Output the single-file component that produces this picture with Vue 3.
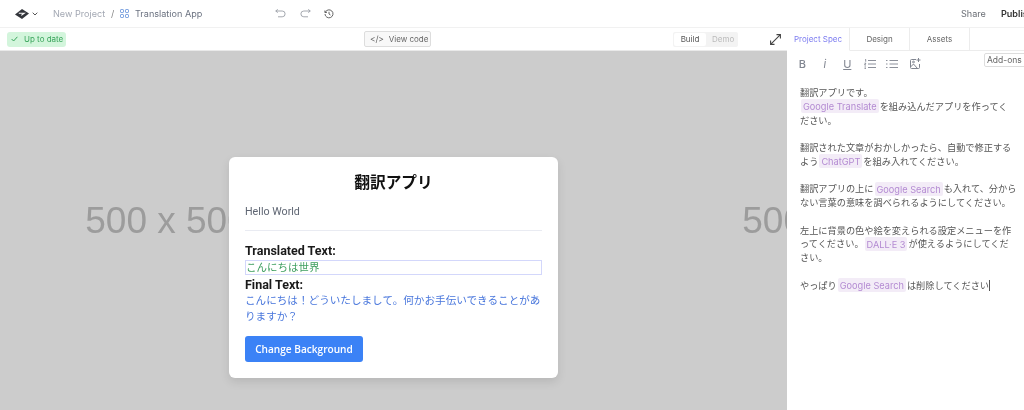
<script setup>
const tabs = ['Project Spec', 'Design', 'Assets']
</script>

<template>
  <div class="app">
    <header class="topbar">
      <div class="brand">
        <svg width="14" height="10" viewBox="0 0 14 10"><path d="M7 0 14 4.500 7 10 0 5.500Z" fill="#33353b"/><path d="M3.800 4.300h5.400L6.300 6.400" fill="none" stroke="#fff" stroke-width="1.100"/></svg>
        <svg width="6" height="4" viewBox="0 0 6 4"><path d="M.7.7 3 3 5.300.7" fill="none" stroke="#555" stroke-width="1"/></svg>
      </div>
      <span class="crumb">New Project</span>
      <span class="slash">/</span>
      <svg class="grid-icon" width="9" height="9" viewBox="0 0 9 9" fill="none" stroke="#5b8bd8" stroke-width=".9"><rect x=".5" y=".5" width="3" height="3" rx=".8"/><rect x="5.500" y=".5" width="3" height="3" rx=".8"/><rect x=".5" y="5.500" width="3" height="3" rx=".8"/><rect x="5.500" y="5.500" width="3" height="3" rx=".8"/></svg>
      <span class="app-name">Translation App</span>
      <div class="history">
        <svg width="11" height="9" viewBox="0 0 11 9" fill="none" stroke="#9a9ea6" stroke-width=".9"><path d="M2.800.4.700 2l2.100 1.600M.9 2h6.300a2.700 2.700 0 0 1 0 5.800H3"/></svg>
        <svg width="11" height="9" viewBox="0 0 11 9" fill="none" stroke="#9a9ea6" stroke-width=".9"><path d="M8.200.4 10.300 2 8.200 3.600M10.100 2H3.800a2.700 2.700 0 0 0 0 5.800H8"/></svg>
        <svg width="10" height="10" viewBox="0 0 10 10" fill="none" stroke="#555" stroke-width=".9"><path d="M1.300 3.300A4 4 0 1 1 1 5M.9 1.500v2h2M5 2.800V5l1.500 1"/></svg>
      </div>
      <div class="top-actions">
        <span class="share">Share</span>
        <span class="publish">Publish</span>
      </div>
    </header>

    <div class="workspace">
      <main class="preview">
        <div class="toolbar">
          <div class="status">
            <svg width="7" height="6" viewBox="0 0 7 6"><path d="M.6 3 2.600 5 6.400.8" fill="none" stroke="#3aa55c" stroke-width="1"/></svg>
            <span>Up to date</span>
          </div>
          <button class="code-btn"><span class="code-glyph">&lt;/&gt;</span>View code</button>
          <div class="mode">
            <span class="mode-on">Build</span>
            <span class="mode-off">Demo</span>
          </div>
          <svg class="expand" width="11" height="11" viewBox="0 0 11 11" fill="none" stroke="#444" stroke-width="1.100"><path d="M6.500.6h3.900v3.900M10.400.6.6 10.400M.6 6.500v3.900h3.900"/></svg>
        </div>
        <div class="canvas">
          <div class="tiles">
            <div class="tile">500 x 500</div>
            <div class="tile">500 x 500</div>
          </div>
          <section class="card">
            <h1>翻訳アプリ</h1>
            <p class="source">Hello World</p>
            <hr>
            <h2>Translated Text:</h2>
            <div class="translated">こんにちは世界</div>
            <h2>Final Text:</h2>
            <p class="final">こんにちは！どういたしまして。何かお手伝いできることがありますか？</p>
            <button class="change">Change Background</button>
          </section>
        </div>
      </main>

      <aside class="spec">
        <nav class="tabs">
          <span v-for="(t, i) in tabs" :key="t" class="tab" :class="{ active: i === 0 }">{{ t }}</span>
          <span class="tab-fill"></span>
        </nav>
        <div class="format">
          <span class="tool b">B</span>
          <span class="tool i">i</span>
          <span class="tool u">U</span>
          <span class="tool"><svg width="12" height="10" viewBox="0 0 12 10" fill="none" stroke="#808590" stroke-width=".9"><path d="M4 1.500h8M4 5h8M4 8.500h8M1 .4h.7v2.300M.5 4.200h1.400L.5 6h1.500M.5 8h1.500M.5 9.600h1.500"/></svg></span>
          <span class="tool"><svg width="12" height="10" viewBox="0 0 12 10" fill="none" stroke="#808590" stroke-width=".9"><path d="M3.500 1.500H12M3.500 5H12M3.500 8.500H12M0 1.500h1.500M0 5h1.500M0 8.500h1.500"/></svg></span>
          <span class="tool"><svg width="12" height="12" viewBox="0 0 12 12" fill="none" stroke="#808590" stroke-width="1"><path d="M7 1.500H2.500a1 1 0 0 0-1 1v7a1 1 0 0 0 1 1h7a1 1 0 0 0 1-1V6M1.500 9 4.500 6l4 4.500M9.500 0v4M7.500 2h4"/><circle cx="4.500" cy="4" r=".9"/></svg></span>
          <span class="addons">Add-ons</span>
        </div>
        <div class="doc">
          <p>翻訳アプリです。<br><span class="chip">Google Translate</span>を組み込んだアプリを作ってく<br>ださい。</p>
          <p>翻訳された文章がおかしかったら、自動で修正する<br>よう<span class="chip">ChatGPT</span>を組み入れてください。</p>
          <p>翻訳アプリの上に<span class="chip">Google Search</span>も入れて、分から<br>ない言葉の意味を調べられるようにしてください。</p>
          <p>左上に背景の色や絵を変えられる設定メニューを作<br>ってください。<span class="chip">DALL·E 3</span>が使えるようにしてくだ<br>さい。</p>
          <p>やっぱり<span class="chip">Google Search</span>は削除してください<span class="caret"></span></p>
        </div>
      </aside>
    </div>
  </div>
</template>

<style>
html, body { margin: 0; background: #fff; }
</style>

<style scoped>
.app {
  width: 1024px;
  height: 410px;
  overflow: hidden;
  display: flex;
  flex-direction: column;
  font-family: Inter, "Noto Sans CJK JP", sans-serif;
  color: #444;
  filter: blur(0.35px);
}
.topbar {
  height: 27px;
  flex: none;
  display: flex;
  align-items: center;
  border-bottom: 1px solid #f1f1f1;
  font-size: 9.100px;
  padding-left: 15px;
}
.brand { display: flex; align-items: center; gap: 3px; width: 38px; }
.crumb { color: #a3a8b3; width: 58px; }
.slash { color: #888; width: 9px; }
.grid-icon { margin-right: 6px; }
.app-name { color: #6b7280; width: 140px; }
.history { display: flex; align-items: center; gap: 13.500px; }
.top-actions { margin-left: auto; display: flex; gap: 15px; width: 63px; overflow: hidden; white-space: nowrap; }
.share { color: #6b6f76; }
.publish { color: #333; font-weight: 600; }

.workspace { flex: 1; display: flex; min-height: 0; }
.preview { width: 787px; flex: none; display: flex; flex-direction: column; }
.toolbar {
  height: 23px;
  box-sizing: border-box;
  flex: none;
  display: flex;
  align-items: center;
  padding-left: 7px;
  font-size: 8px;
  border-bottom: 1px solid #e9e9e9;
}
.status {
  width: 59px; height: 15px;
  box-sizing: border-box;
  padding-left: 4px;
  display: flex; align-items: center; gap: 6px;
  background: #d3f5dc;
  color: #3aa55c;
  border-radius: 3px;
  white-space: nowrap;
}
.code-btn {
  margin-left: 298px;
  width: 67px; height: 16px;
  box-sizing: border-box;
  display: flex; align-items: center; gap: 5px;
  padding: 0 0 0 5px;
  background: #f8f8f8;
  border: 1px solid #ddd;
  border-radius: 2px;
  font: inherit;
  color: #666;
  white-space: nowrap;
}
.code-glyph { font-size: 8.500px; letter-spacing: -.2px; }
.mode {
  margin-left: 242px;
  width: 65px; height: 15px;
  display: flex; align-items: center;
  background: #f3f3f3;
  border-radius: 2px;
  white-space: nowrap;
}
.mode-on { background: #fff; width: 32px; height: 13px; line-height: 13px; text-align: center; color: #555; margin-left: 1px; border-radius: 2px; }
.mode-off { color: #bbb; margin-left: 6px; }
.expand { margin-left: 32px; }

.canvas {
  flex: 1;
  min-height: 0;
  overflow: hidden;
  background: #ccc;
  display: grid;
  grid-template-columns: minmax(0, 1fr);
  grid-template-rows: minmax(0, 1fr);
}
.tiles {
  grid-area: 1 / 1;
  display: flex;
  margin-left: -162px;
  padding-top: 148px;
  height: 44px;
}
.tile {
  flex: none;
  width: 657px;
  text-align: center;
  font: 37px/44px "Liberation Sans", sans-serif;
  color: #9c9c9c;
}
.card {
  grid-area: 1 / 1;
  justify-self: center;
  align-self: start;
  margin-top: 106px;
  width: 329px;
  height: 221px;
  box-sizing: border-box;
  padding: 15px 16px 0;
  background: #fff;
  border-radius: 6px;
  box-shadow: 0 4px 10px rgba(0, 0, 0, .1);
  font-family: Roboto, "Noto Sans CJK JP", sans-serif;
}
.card h1 {
  margin: 0;
  font-size: 15.700px;
  line-height: 22px;
  font-weight: 700;
  text-align: center;
  color: #111;
}
.source { margin: 10px 0 0; font-size: 10.700px; line-height: 15px; color: #5f6673; }
.card hr { margin: 11px 0 0; border: 0; border-top: 1px solid #e9ebf2; }
.card h2 { margin: 0; font-size: 12.500px; line-height: 15px; font-weight: 700; color: #1a1a1a; }
.card hr + h2 { margin-top: 12px; }
.translated {
  margin: 2px 0 2px;
  height: 15px;
  box-sizing: border-box;
  border: 1px solid #d3d7fb;
  font-size: 10.500px;
  line-height: 13px;
  color: #3f9f60;
  white-space: nowrap;
}
.final { margin: 1px 0 0; font-size: 10.600px; line-height: 16px; color: #4876dc; }
.change {
  display: block;
  margin-top: 11px;
  width: 118px; height: 26px;
  padding: 0;
  border: 0;
  border-radius: 3px;
  background: #3b82f6;
  color: #fff;
  font: 600 10.100px "Open Sans", sans-serif;
}

.spec { flex: 1; min-width: 0; display: flex; flex-direction: column; overflow: hidden; }
.tabs { height: 23px; flex: none; display: flex; font-size: 8px; }
.tab {
  width: 60px; box-sizing: border-box;
  display: flex; align-items: center; justify-content: center;
  color: #666;
  border-right: 1px solid #ececec;
  border-bottom: 1px solid #ececec;
  white-space: nowrap;
}
.tab.active { width: 63px; color: #7c7cf0; border-bottom-color: transparent; }
.tab-fill { flex: 1; border-bottom: 1px solid #ececec; }
.format {
  height: 25px; flex: none;
  display: flex; align-items: center;
  padding-left: 4px;
  color: #808590;
  font-size: 11px;
}
.tool { width: 22.500px; display: flex; justify-content: center; align-items: center; }
.b { font-weight: 500; }
.i { font-style: italic; }
.u { text-decoration: underline; }
.addons {
  margin-left: auto;
  width: 44px; height: 14px;
  box-sizing: border-box;
  border: 1px solid #ddd;
  border-radius: 2px;
  font-size: 8.500px;
  line-height: 12px;
  padding-left: 2px;
  color: #666;
  margin-top: -7px;
  margin-right: -4px;
}
.doc { padding: 10px 0 0 13px; font-size: 9.200px; line-height: 13.750px; color: #555; white-space: nowrap; }
.doc p { margin: 0 0 13.750px; }
.chip { background: #f3ecf7; color: #b38ad2; border-radius: 2px; padding: 1.500px 2px; margin: 0 1px; }
.caret { display: inline-block; width: 1px; height: 11px; background: #555; vertical-align: -2px; }
</style>
